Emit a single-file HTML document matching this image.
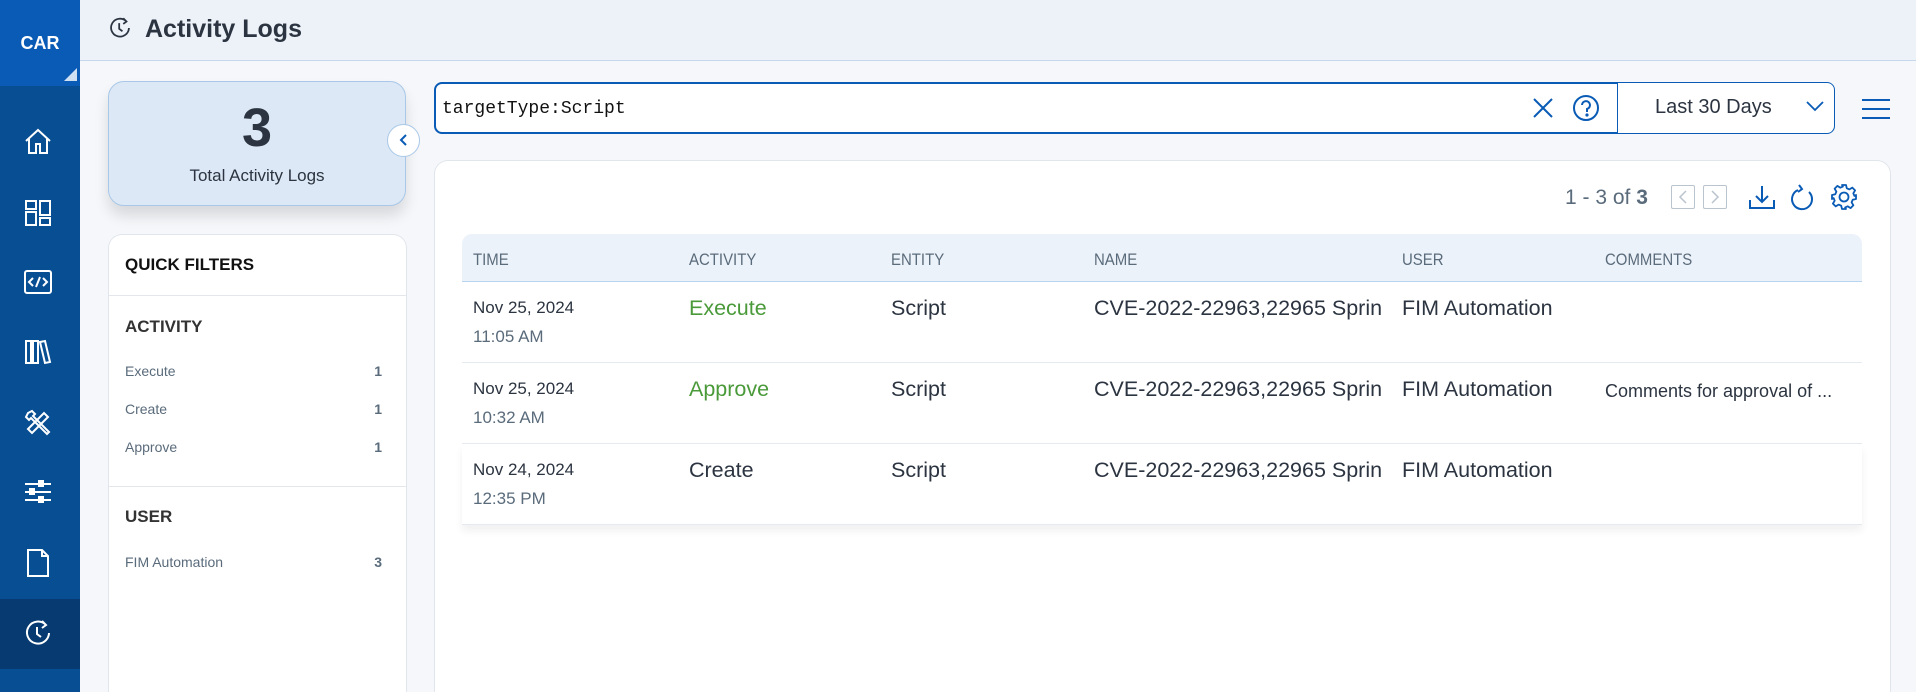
<!DOCTYPE html>
<html><head><meta charset="utf-8"><style>
*{box-sizing:border-box;margin:0;padding:0}
html,body{width:1916px;height:692px;overflow:hidden}
body{background:#f5f7fa;font-family:"Liberation Sans",sans-serif;color:#2b3440;position:relative}
.wrap{position:absolute;left:0;top:0;width:1916px;height:692px;overflow:hidden}
.abs{position:absolute}
.side{left:0;top:0;width:80px;height:692px;background:#084e92}
.logo{left:0;top:0;width:80px;height:86px;background:#0a5bb5;color:#fff;font-weight:bold;font-size:18px;text-align:center;line-height:86px}
.logo:after{content:"";position:absolute;right:3px;bottom:5px;border-left:13px solid transparent;border-bottom:13px solid #cfe0f3}
.active{left:0;top:599px;width:80px;height:70px;background:#073a70}
.ic{position:absolute;left:22px;width:32px;height:32px}
.hdr{left:80px;top:0;right:0;height:61px;background:#edf2f9;border-bottom:1px solid #c5d8ec}
.card{background:#fff;border:1px solid #e1e6ec;border-bottom:none;border-radius:14px 14px 0 0}
.qf div{position:absolute;left:16px}
.cnt{position:absolute;right:24px!important;left:auto!important;font-weight:bold}
.th{position:absolute;top:250px;font-size:17px;color:#5a6b7b;transform:scaleX(.88);transform-origin:left}
.row{position:absolute;left:462px;width:1400px;height:81px;border-bottom:1px solid #e4eaf0;background:#fff}
.row span{position:absolute;white-space:nowrap}
.d{top:16px;font-size:17px;color:#2b3440}
.t{top:45px;font-size:17px;color:#5a6b7b}
.m{top:14px;font-size:21.5px}
</style></head><body><div class="wrap">
<div class="abs side"></div>
<div class="abs logo">CAR</div>
<div class="abs active"></div>
<svg class="ic" style="top:126px" viewBox="0 0 32 32" fill="none" stroke="#fff" stroke-width="2"><path d="M4 15L16 4l12 11M7 13v14h7v-9h4v9h7V13"/></svg>
<svg class="ic" style="top:197px" viewBox="0 0 32 32" fill="none" stroke="#fff" stroke-width="2"><rect x="4" y="4" width="10" height="8"/><rect x="4" y="15" width="10" height="13"/><rect x="18" y="4" width="10" height="14"/><rect x="18" y="21" width="10" height="7"/></svg>
<svg class="ic" style="top:266px" viewBox="0 0 32 32" fill="none" stroke="#fff" stroke-width="2"><rect x="3" y="5" width="26" height="22" rx="2"/><path d="M11 12l-4 4 4 4M21 12l4 4-4 4M18 11l-4 10"/></svg>
<svg class="ic" style="top:336px" viewBox="0 0 32 32" fill="none" stroke="#fff" stroke-width="2"><rect x="4" y="5" width="5" height="22"/><rect x="11" y="5" width="5" height="22"/><path d="M18 6l5-1 5 21-5 1z"/></svg>
<svg class="ic" style="top:407px" viewBox="0 0 32 32" fill="none" stroke="#fff" stroke-width="2"><path d="M6 22L22 6l4 4-16 16zM6 6l4-2 3 3-2 2 16 16-2 2L9 11 7 13 4 10z"/></svg>
<svg class="ic" style="top:476px" viewBox="0 0 32 32" fill="none" stroke="#fff" stroke-width="2"><path d="M3 8h26M3 16h26M3 24h26"/><rect x="17" y="5" width="4" height="5" fill="#fff"/><rect x="8" y="13" width="4" height="5" fill="#fff"/><rect x="17" y="21" width="4" height="5" fill="#fff"/></svg>
<svg class="ic" style="top:547px" viewBox="0 0 32 32" fill="none" stroke="#fff" stroke-width="2"><path d="M6 3h14l6 6v20H6zM20 3v6h6"/></svg>
<svg class="ic" style="top:617px" viewBox="0 0 32 32" fill="none" stroke="#fff" stroke-width="2"><path d="M24 8A11 11 0 1 0 27 16M20 4l4 4-4 3M15 10v7l4 3"/></svg>

<div class="abs hdr"></div>
<svg class="abs" style="left:107px;top:14px" width="26" height="28" viewBox="0 0 32 32" fill="none" stroke="#2b3440" stroke-width="2.2"><path d="M24 8A11 11 0 1 0 27 16M20 4l4 4-4 3M15 10v7l4 3"/></svg>
<div class="abs" style="left:145px;top:15px;font-size:25px;font-weight:bold;color:#2b3440">Activity Logs</div>

<div class="abs" style="left:108px;top:81px;width:298px;height:125px;background:#dce8f5;border:1px solid #a9c8e8;border-radius:16px;box-shadow:0 10px 14px rgba(0,0,0,.12);text-align:center">
<div style="font-size:54px;font-weight:bold;margin-top:18px;line-height:56px">3</div>
<div style="font-size:17px;color:#2b3440;margin-top:10px">Total Activity Logs</div></div>
<div class="abs" style="left:387px;top:124px;width:33px;height:33px;border-radius:50%;background:#fff;border:1px solid #a9c8e8"></div>
<svg class="abs" style="left:396px;top:132px" width="16" height="16" viewBox="0 0 16 16" fill="none" stroke="#0a5bb5" stroke-width="2"><path d="M10 3L5 8l5 5"/></svg>

<div class="abs card qf" style="left:108px;top:234px;width:299px;height:458px">
<div style="top:20px;font-weight:bold;font-size:17px;color:#111">QUICK FILTERS</div>
<div style="top:60px;left:0!important;width:297px;border-top:1px solid #e3e7ec"></div>
<div style="top:82px;font-weight:bold;font-size:17px;color:#333">ACTIVITY</div>
<div style="top:128px;font-size:14px;color:#5a6b7b">Execute</div><div class="cnt" style="top:128px;font-size:14px;color:#5a6b7b">1</div>
<div style="top:166px;font-size:14px;color:#5a6b7b">Create</div><div class="cnt" style="top:166px;font-size:14px;color:#5a6b7b">1</div>
<div style="top:204px;font-size:14px;color:#5a6b7b">Approve</div><div class="cnt" style="top:204px;font-size:14px;color:#5a6b7b">1</div>
<div style="top:251px;left:0!important;width:297px;border-top:1px solid #e3e7ec"></div>
<div style="top:272px;font-weight:bold;font-size:17px;color:#333">USER</div>
<div style="top:319px;font-size:14px;color:#5a6b7b">FIM Automation</div><div class="cnt" style="top:319px;font-size:14px;color:#5a6b7b">3</div>
</div>

<div class="abs" style="left:434px;top:82px;width:1185px;height:52px;background:#fff;border:2px solid #0a5bb5;border-radius:8px 0 0 8px"></div>
<div class="abs" style="left:442px;top:99px;font-family:'Liberation Mono',monospace;font-size:18px;color:#111">targetType:Script</div>
<svg class="abs" style="left:1532px;top:97px" width="22" height="22" viewBox="0 0 22 22" stroke="#0a5bb5" stroke-width="2"><path d="M2 2l18 18M20 2L2 20"/></svg>
<svg class="abs" style="left:1572px;top:94px" width="28" height="28" viewBox="0 0 28 28" fill="none" stroke="#0a5bb5" stroke-width="2"><circle cx="14" cy="14" r="12"/><path d="M10 11a4 4 0 1 1 5 4v3"/><circle cx="15" cy="21" r=".6" fill="#0a5bb5"/></svg>
<div class="abs" style="left:1617px;top:82px;width:218px;height:52px;background:#fff;border:1.5px solid #0a5bb5;border-radius:0 8px 8px 0"></div>
<div class="abs" style="left:1655px;top:96px;font-size:20px;color:#2b3440">Last 30 Days</div>
<svg class="abs" style="left:1805px;top:100px" width="20" height="12" viewBox="0 0 20 12" fill="none" stroke="#0a5bb5" stroke-width="1.8"><path d="M2 2l8 8 8-8"/></svg>
<svg class="abs" style="left:1862px;top:98px" width="28" height="22" viewBox="0 0 28 22" stroke="#0a5bb5" stroke-width="2"><path d="M0 2h28M0 11h28M0 20h28"/></svg>

<div class="abs card" style="left:434px;top:160px;width:1457px;height:532px"></div>
<div class="abs" style="left:1565px;top:186px;font-size:21px;color:#5a6b7b">1 - 3 of <b>3</b></div>
<div class="abs" style="left:1671px;top:185px;width:24px;height:24px;border:1.5px solid #b9c4cf;border-radius:2px"></div>
<div class="abs" style="left:1703px;top:185px;width:24px;height:24px;border:1.5px solid #b9c4cf;border-radius:2px"></div>
<svg class="abs" style="left:1671px;top:185px" width="56" height="24" viewBox="0 0 56 24" fill="none" stroke="#b9c4cf" stroke-width="1.5"><path d="M15 6l-6 6 6 6M41 6l6 6-6 6"/></svg>
<svg class="abs" style="left:1748px;top:183px" width="28" height="28" viewBox="0 0 28 28" fill="none" stroke="#0a5bb5" stroke-width="2"><path d="M2 17v8h24v-8M14 3v16M8 13l6 6 6-6"/></svg>
<svg class="abs" style="left:1790px;top:183px" width="26" height="28" viewBox="0 0 26 28" fill="none" stroke="#0a5bb5" stroke-width="2"><path d="M19 9A10 10 0 1 1 8 7M9 2l3 4-4 3"/></svg>
<svg class="abs" style="left:1830px;top:183px" width="28" height="28" viewBox="0 0 28 28" fill="none" stroke="#0a5bb5" stroke-width="1.8" stroke-linejoin="round"><path d="M12 2h4l.8 3.3 2.6 1.1 2.9-1.8 2.8 2.8-1.8 2.9 1.1 2.6L26 12v4l-3.3.8-1.1 2.6 1.8 2.9-2.8 2.8-2.9-1.8-2.6 1.1L16 26h-4l-.8-3.3-2.6-1.1-2.9 1.8-2.8-2.8 1.8-2.9-1.1-2.6L2 16v-4l3.3-.8 1.1-2.6-1.8-2.9 2.8-2.8 2.9 1.8 2.6-1.1z"/><circle cx="14" cy="14" r="4.5"/></svg>

<div class="abs" style="left:462px;top:234px;width:1400px;height:48px;background:#ecf2f9;border-bottom:1.5px solid #b8d4ee;border-radius:10px 10px 0 0"></div>
<div class="th" style="left:473px">TIME</div>
<div class="th" style="left:689px">ACTIVITY</div>
<div class="th" style="left:891px">ENTITY</div>
<div class="th" style="left:1094px">NAME</div>
<div class="th" style="left:1402px">USER</div>
<div class="th" style="left:1605px">COMMENTS</div>

<div class="row" style="top:282px"><span class="d" style="left:11px">Nov 25, 2024</span><span class="t" style="left:11px">11:05 AM</span><span class="m" style="left:227px;color:#4a9a3a">Execute</span><span class="m" style="left:429px">Script</span><span class="m" style="left:632px;width:288px;overflow:hidden">CVE-2022-22963,22965 Spring Framework</span><span class="m" style="left:940px">FIM Automation</span></div>
<div class="row" style="top:363px"><span class="d" style="left:11px">Nov 25, 2024</span><span class="t" style="left:11px">10:32 AM</span><span class="m" style="left:227px;color:#4a9a3a">Approve</span><span class="m" style="left:429px">Script</span><span class="m" style="left:632px;width:288px;overflow:hidden">CVE-2022-22963,22965 Spring Framework</span><span class="m" style="left:940px">FIM Automation</span><span style="left:1143px;top:18px;font-size:18px">Comments for approval of ...</span></div>
<div class="row" style="top:444px;box-shadow:0 6px 8px rgba(0,0,0,.06)"><span class="d" style="left:11px">Nov 24, 2024</span><span class="t" style="left:11px">12:35 PM</span><span class="m" style="left:227px">Create</span><span class="m" style="left:429px">Script</span><span class="m" style="left:632px;width:288px;overflow:hidden">CVE-2022-22963,22965 Spring Framework</span><span class="m" style="left:940px">FIM Automation</span></div>
</div></body></html>
